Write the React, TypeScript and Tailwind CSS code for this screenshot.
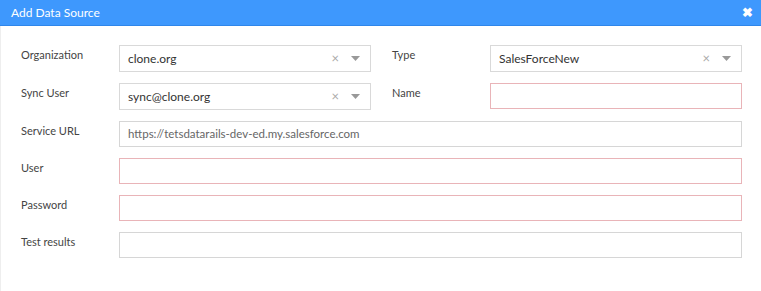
import { ReactNode } from "react"

function Select({ value }: { value: string }) {
  return (
    <div className="flex h-[27px] flex-1 items-center border border-[#d9d9d9] bg-white pl-2 pr-2.5">
      <span className="flex-1 text-[12px] text-[#333]">{value}</span>
      <span className="mr-3 text-[13px] leading-none text-[#aaa]">×</span>
      <svg width="9" height="5" viewBox="0 0 9 5">
        <path d="M0 0h9L4.5 5z" fill="#999" />
      </svg>
    </div>
  )
}

function Input({ value, error }: { value?: string; error?: boolean }) {
  return (
    <div
      className={`flex h-[26px] flex-1 items-center border px-2 text-[11.5px] text-[#666] ${
        error ? "border-[#e9b4b8]" : "border-[#d6d6d6]"
      }`}
    >
      {value}
    </div>
  )
}

function Field({ label, half, children }: { label: string; half?: boolean; children: ReactNode }) {
  return (
    <div className={`flex items-start ${half ? "flex-1" : ""}`}>
      <div className="w-[98px] shrink-0 pt-[2px] text-[11px] text-[#444]">{label}</div>
      {children}
    </div>
  )
}

export default function App() {
  return (
    <div className="h-[291px] w-[761px] bg-white font-['Lato',sans-serif]">
      <div className="flex h-[26px] items-center justify-between border-b border-[#2f86ea] bg-[#3e98fd] pl-[11px] pr-[8px]">
        <span className="text-[12px] text-white">Add Data Source</span>
        <span className="text-[13px] font-bold leading-none text-white">✖</span>
      </div>
      <div className="flex h-[265px] flex-col gap-[11px] border-l border-[#eee] pl-[20px] pr-[19px] pt-[19px]">
        <div className="flex gap-[21px]">
          <Field label="Organization" half>
            <Select value="clone.org" />
          </Field>
          <Field label="Type" half>
            <Select value="SalesForceNew" />
          </Field>
        </div>
        <div className="flex gap-[21px]">
          <Field label="Sync User" half>
            <Select value="sync@clone.org" />
          </Field>
          <Field label="Name" half>
            <Input error />
          </Field>
        </div>
        <Field label="Service URL">
          <Input value="https://tetsdatarails-dev-ed.my.salesforce.com" />
        </Field>
        <Field label="User">
          <Input error />
        </Field>
        <Field label="Password">
          <Input error />
        </Field>
        <Field label="Test results">
          <Input />
        </Field>
      </div>
    </div>
  )
}
